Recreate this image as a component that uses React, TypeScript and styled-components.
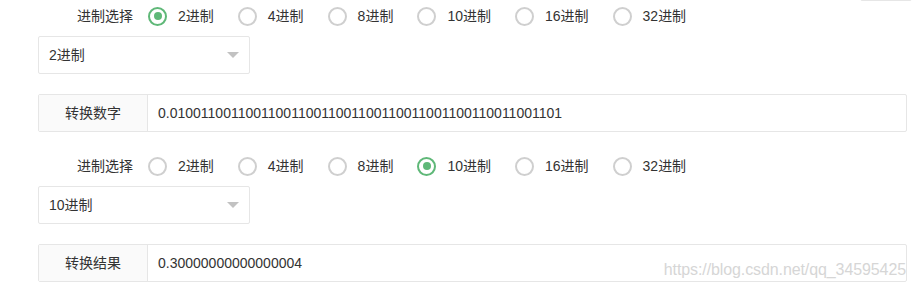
import React, { useState } from 'react'
import { createGlobalStyle, styled } from 'styled-components'

const GlobalStyle = createGlobalStyle`
  html, body {
    margin: 0;
    padding: 0;
    background: #fff;
  }
  body {
    font-family: "Liberation Sans", "Noto Sans CJK SC", sans-serif;
    font-size: 14px;
    color: #333;
  }
`

const Page = styled.div`
  position: relative;
  width: 916px;
  padding: 0 9px 0 38px;
  box-sizing: border-box;
`

const TopStub = styled.div`
  display: flex;
  justify-content: flex-end;
  margin: -37px -5px 0 0;
  height: 38px;
`

const StubBox = styled.div`
  width: 50px;
  height: 36px;
  border: 1px solid #e6e6e6;
  border-radius: 2px;
`

const Section = styled.section<{ $first?: boolean }>`
  margin-top: ${(p) => (p.$first ? '-1px' : '18px')};
`

const RadioRow = styled.div`
  display: flex;
  align-items: center;
  height: 32px;
`

const RowLabel = styled.span`
  width: 95px;
  text-align: right;
  line-height: 20px;
  padding-right: 15px;
`

const RadioItem = styled.label`
  display: flex;
  align-items: center;
  margin-right: 24px;
  cursor: pointer;
  line-height: 20px;
`

const RadioDot = styled.span<{ $checked: boolean }>`
  position: relative;
  width: 19px;
  height: 19px;
  box-sizing: border-box;
  border-radius: 50%;
  border: 2px solid ${(p) => (p.$checked ? '#5fb878' : '#cfcfcf')};
  margin-right: 11px;

  &::after {
    content: '';
    display: ${(p) => (p.$checked ? 'block' : 'none')};
    position: absolute;
    left: 50%;
    top: 50%;
    width: 8px;
    height: 8px;
    margin: -4px 0 0 -4px;
    border-radius: 50%;
    background: #5fb878;
  }
`

const Select = styled.div`
  position: relative;
  margin-top: 4px;
  width: 212px;
  height: 38px;
  box-sizing: border-box;
  border: 1px solid #e6e6e6;
  border-radius: 2px;
  display: flex;
  align-items: center;
  padding-left: 10px;
  line-height: 20px;

  &::after {
    content: '';
    position: absolute;
    right: 10px;
    top: 15px;
    border-top: 6px solid #c2c2c2;
    border-left: 6px solid transparent;
    border-right: 6px solid transparent;
  }
`

const InputGroup = styled.div`
  position: relative;
  margin-top: 20px;
  height: 38px;
  box-sizing: border-box;
  border: 1px solid #e6e6e6;
  border-radius: 2px;
  display: flex;
  align-items: stretch;
  line-height: 20px;
`

const GroupLabel = styled.div`
  width: 108px;
  background: #fafafa;
  border-right: 1px solid #e6e6e6;
  display: flex;
  align-items: center;
  justify-content: center;
`

const GroupValue = styled.div`
  flex: 1;
  display: flex;
  align-items: center;
  padding-left: 10px;
`

const Watermark = styled.span`
  position: absolute;
  right: 0;
  bottom: 2px;
  font-family: "Liberation Sans", Arial, sans-serif;
  font-size: 16px;
  letter-spacing: -0.1px;
  color: #d6d6d6;
  line-height: 18px;
  pointer-events: none;
`

const BASES = [2, 4, 8, 10, 16, 32]

interface ConvertSectionProps {
  first?: boolean
  initial: number
  label: string
  value: string
  watermark?: string
}

function ConvertSection({ first, initial, label, value, watermark }: ConvertSectionProps) {
  const [base, setBase] = useState(initial)
  return (
    <Section $first={first}>
      <RadioRow>
        <RowLabel>进制选择</RowLabel>
        {BASES.map((b) => (
          <RadioItem key={b} onClick={() => setBase(b)}>
            <RadioDot $checked={b === base} />
            {b}进制
          </RadioItem>
        ))}
      </RadioRow>
      <Select>{base}进制</Select>
      <InputGroup>
        <GroupLabel>{label}</GroupLabel>
        <GroupValue>{value}</GroupValue>
        {watermark && <Watermark>{watermark}</Watermark>}
      </InputGroup>
    </Section>
  )
}

export default function App() {
  return (
    <>
      <GlobalStyle />
      <Page>
        <TopStub>
          <StubBox />
        </TopStub>
        <ConvertSection
          first
          initial={2}
          label="转换数字"
          value="0.0100110011001100110011001100110011001100110011001101"
        />
        <ConvertSection
          initial={10}
          label="转换结果"
          value="0.30000000000000004"
          watermark="https://blog.csdn.net/qq_34595425"
        />
      </Page>
    </>
  )
}
